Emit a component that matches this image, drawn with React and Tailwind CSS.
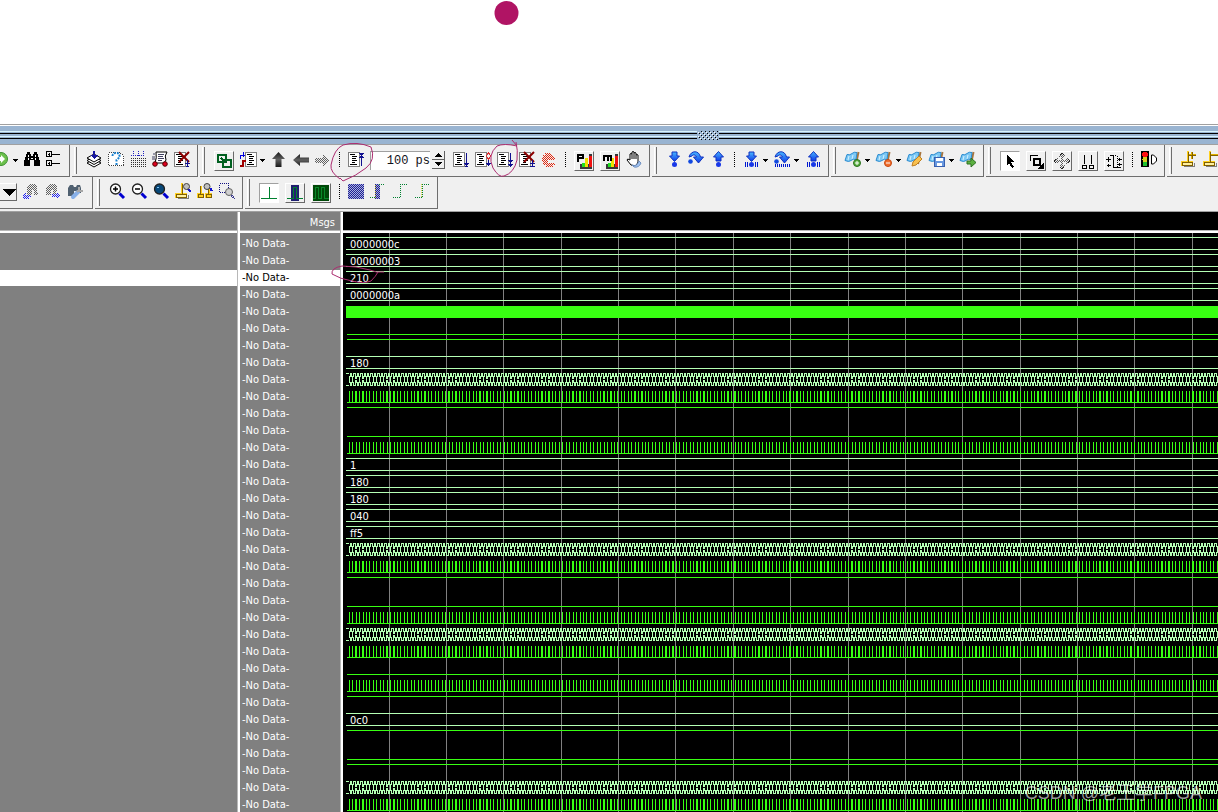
import clsx from 'clsx';

/**
 * Waveform viewer
 * ---------------
 * - Two rows of docked toolbars on top
 * - Below: signal names, current values ("Msgs") and the wave pane
 */

// One entry for each signal row. kind decides how the wave is drawn.
const signals = [
  { kind: 'bus', value: '0000000c' },
  { kind: 'bus', value: '00000003' },
  { kind: 'bus', value: '210', selected: true },
  { kind: 'bus', value: '0000000a' },
  { kind: 'solid' },
  { kind: 'low' },
  { kind: 'high' },
  { kind: 'bus', value: '180' },
  { kind: 'dense' },
  { kind: 'clock' },
  { kind: 'high' },
  { kind: 'low' },
  { kind: 'pulse' },
  { kind: 'bus', value: '1' },
  { kind: 'bus', value: '180' },
  { kind: 'bus', value: '180' },
  { kind: 'bus', value: '040' },
  { kind: 'bus', value: 'ff5' },
  { kind: 'dense' },
  { kind: 'clock' },
  { kind: 'high' },
  { kind: 'low' },
  { kind: 'pulse' },
  { kind: 'dense' },
  { kind: 'clock' },
  { kind: 'low' },
  { kind: 'pulse' },
  { kind: 'high' },
  { kind: 'bus', value: '0c0' },
  { kind: 'high' },
  { kind: 'low' },
  { kind: 'high' },
  { kind: 'dense' },
  { kind: 'clock' },
];

const STEP = 31 / 9; // distance between two edges
const EDGES = 700;

const edgeX = (k) => Math.floor(6.3 + STEP * k);

// The 3rd and 5th edge of every nine is drawn wider
const isWide = (k) => k % 9 === 2 || k % 9 === 4;

// Vertical strokes of a clock or a pulse train
const strokes = (wide) => {
  let d = '';
  for (let k = 0; k < EDGES; k++) {
    const x = edgeX(k);
    d += wide && isWide(k) ? `M${x - 1} 2h2v11h-2z` : `M${x} 2h1v11h-1z`;
  }
  return d;
};

// Bus that changes on every edge
const crossings = () => {
  let d = 'M3 1h3v1h-3zM3 13h3v1h-3z';
  for (let k = 0; k < EDGES; k++) {
    const x = edgeX(k);
    const end = edgeX(k + 1) - 1;
    d += isWide(k) ? `M${x - 1} 4h2v3h-2zM${x - 1} 8h2v3h-2z` : `M${x} 4h1v7h-1z`;
    d += `M${x + 1} 1h1v4h-1zM${x + 1} 10h1v4h-1z`;
    d += `M${end} 1h1v4h-1zM${end} 10h1v4h-1z`;
    d += `M${x + 1} 1h${end - x}v1h-${end - x}zM${x + 1} 13h${end - x}v1h-${end - x}z`;
  }
  return d;
};

const clockPath = strokes(true);
const pulsePath = strokes(false);
const densePath = crossings();

function Wave({ kind, value }) {
  if (kind === 'bus') {
    return (
      <div className="h-[17px] pt-px pl-[3px]">
        <div className="h-[13px] border-y border-[#b4ffb4] pl-1 text-[11px] leading-[13px] text-white">{value}</div>
      </div>
    );
  }
  if (kind === 'solid') {
    return (
      <div className="h-[17px] pt-[2px] pl-[3px]">
        <div className="h-3 bg-[#38ff12]" />
      </div>
    );
  }
  if (kind === 'high' || kind === 'low') {
    return (
      <div className={clsx('h-[17px] pl-1', kind === 'high' ? 'pt-px' : 'pt-[13px]')}>
        <div className="h-px bg-[#38ff12]" />
      </div>
    );
  }
  const d = kind === 'dense' ? densePath : kind === 'clock' ? clockPath : pulsePath;
  return (
    <svg className="block h-[17px] w-full" shapeRendering="crispEdges">
      <path d={d} fill={kind === 'dense' ? '#b4ffb4' : '#38ff12'} fillRule="nonzero" />
      {kind !== 'dense' && <rect x="4" y="13" width="100%" height="1" fill="#38ff12" />}
    </svg>
  );
}

/* ---------- toolbar parts ---------- */

function Tool({ label, children }) {
  return (
    <button aria-label={label} className="h-4 w-4 shrink-0">
      <svg viewBox="0 0 16 16" className="block h-4 w-4 overflow-visible" fill="none" shapeRendering="crispEdges">
        {children}
      </svg>
    </button>
  );
}

// Raised button, or sunken when it is the active mode
function Raised({ label, active, children }) {
  return (
    <button
      aria-label={label}
      className={clsx(
        'h-5 w-5 shrink-0 border border-solid p-px',
        active
          ? 'border-t-[#a0a0a0] border-r-white border-b-white border-l-[#a0a0a0] bg-white'
          : 'border-t-white border-r-[#696969] border-b-[#696969] border-l-white bg-[#f0f0f0]'
      )}
    >
      <svg viewBox="0 0 16 16" className="block h-4 w-4" fill="none" shapeRendering="crispEdges">
        {children}
      </svg>
    </button>
  );
}

function Caret() {
  return (
    <button aria-label="More" className="-ml-[2px] h-4 w-[5px] shrink-0">
      <svg viewBox="0 0 5 16" className="block h-4 w-[5px]" shapeRendering="crispEdges">
        <path d="M0 8h5v1h-1v1h-1v1h-1v-1h-1v-1h-1z" fill="#000" />
      </svg>
    </button>
  );
}

function Dots() {
  return (
    <svg viewBox="0 0 5 16" className="block h-4 w-[5px] shrink-0" shapeRendering="crispEdges">
      <path d="M2.500 1v15" stroke="#000" strokeDasharray="1 1" />
    </svg>
  );
}

function Bar({ label, noHandle, className, children }) {
  return (
    <div
      role="toolbar"
      aria-label={label}
      className={clsx('flex h-8 shrink-0 border-r border-b border-[#6e6e6e]', className || 'pr-[7px]')}
    >
      {!noHandle && <span className="my-[2px] mr-[9px] ml-[2px] w-[3px] border-r border-l border-r-[#6e6e6e] border-l-white" />}
      <div className="flex items-start gap-[6px] pt-[6px]">{children}</div>
    </div>
  );
}

/* ---------- drawings shared by several icons ---------- */

function Sheet() {
  return (
    <>
      <rect x="0.500" y="1.500" width="11" height="14" fill="#fff" stroke="#808080" />
      <path d="M2 3.500h5M4 5.500h5M4 7.500h4M4 9.500h5M4 11.500h3M2 13.500h7" stroke="#000" />
    </>
  );
}

function RedCross() {
  return <path d="M5 1l10 10M15 1l-10 10" stroke="#8b0000" strokeWidth="2" shapeRendering="auto" />;
}

function BlueDown() {
  return <path d="M6 1h5v4h2.500l-5 5.500l-5-5.500h2.500z" fill="url(#blue)" stroke="#1030c0" shapeRendering="auto" />;
}

function BlueUp() {
  return <path d="M6 10h5v-4h2.500l-5-5.500l-5 5.500h2.500z" fill="url(#blue)" stroke="#1030c0" shapeRendering="auto" />;
}

function BlueArc() {
  return (
    <g shapeRendering="auto">
      <path d="M1 6c2-7 10-7 11.500 0h3l-5 6l-5-6h3c-1-2-3-3-4.500-1z" fill="url(#blue)" stroke="#1030c0" />
      <circle cx="2.500" cy="10.500" r="2.300" fill="#1048e0" />
    </g>
  );
}

function Flag() {
  return (
    <g shapeRendering="auto">
      <path d="M13.500 1l-2.500 12" stroke="#a8743c" strokeWidth="2" />
      <path d="M2 3.500q3 1 5-1t5-1l-1 7q-3-1-5 1t-6 0z" fill="#7cc8f4" stroke="#2c8cd0" />
      <path d="M4 5l-1 4M8 4l-1 4" stroke="#d4f0ff" />
    </g>
  );
}

function Lens({ fill = '#fff' }) {
  return (
    <g shapeRendering="auto">
      <path d="M10.500 10.500l4.500 4.500" stroke="#0000d0" strokeWidth="3" />
      <circle cx="6.500" cy="6" r="5" fill={fill} stroke="#202020" strokeWidth="1.300" />
    </g>
  );
}

function Binoculars({ fill }) {
  return (
    <path
      d="M3 1h3v2h1v2h2v-2h1v-2h3v2h1v3h1v3h1v6h-6v-6h-4v6h-6v-6h1v-3h1v-3h1z"
      fill={fill}
    />
  );
}

// Yellow cursor stand
function Stand() {
  return (
    <>
      <path d="M6 0h2v10h4v5h-12v-5h6z" fill="#ffd020" />
      <path d="M7.500 1v10M1.500 11.500h10v3h-10z" stroke="#806000" />
      <path d="M3 15.500h10v-4" stroke="#808080" />
      <path d="M2 12h9v2h-9z" fill="#fff0a0" />
    </>
  );
}

function Chart() {
  return (
    <>
      <path d="M4 16h12v-15h-3v10h-9z" fill="#383838" />
      <rect x="6" y="10" width="3" height="4" fill="#20e020" />
      <rect x="9" y="5" width="3" height="9" fill="#f0e000" />
      <rect x="13" y="3" width="3" height="11" fill="#f01010" />
    </>
  );
}

function Defs() {
  return (
    <svg className="absolute h-0 w-0" aria-hidden="true">
      <defs>
        <linearGradient id="blue" x1="0" y1="0" x2="0" y2="1">
          <stop offset="0" stopColor="#48b8ff" />
          <stop offset="1" stopColor="#1038e8" />
        </linearGradient>
        <linearGradient id="steel" x1="0" y1="0" x2="0" y2="1">
          <stop offset="0" stopColor="#181818" />
          <stop offset="0.5" stopColor="#606060" />
          <stop offset="1" stopColor="#181818" />
        </linearGradient>
        <pattern id="gray-dots" width="2" height="2" patternUnits="userSpaceOnUse">
          <path d="M0 0h1v1h-1zM1 1h1v1h-1z" fill="#606060" />
        </pattern>
        <pattern id="blue-dots" width="2" height="2" patternUnits="userSpaceOnUse">
          <path d="M0 0h1v1h-1zM1 1h1v1h-1z" fill="#2020f0" />
        </pattern>
        <pattern id="navy-dots" width="2" height="2" patternUnits="userSpaceOnUse">
          <path d="M0 0h2v2h-2z" fill="#a8b0e0" />
          <path d="M0 0h1v1h-1zM1 1h1v1h-1z" fill="#202090" />
        </pattern>
        <pattern id="red-dots" width="2" height="2" patternUnits="userSpaceOnUse">
          <path d="M0 0h1v1h-1zM1 1h1v1h-1z" fill="#e02810" />
        </pattern>
        <pattern id="grip" width="4" height="4" patternUnits="userSpaceOnUse">
          <path d="M0 0h1v1h-1zM2 2h1v1h-1z" fill="#000" />
          <path d="M1 1h1v1h-1zM3 3h1v1h-1z" fill="#fff" />
        </pattern>
      </defs>
    </svg>
  );
}

/* ---------- toolbars ---------- */

function TopBars() {
  return (
    <div className="flex gap-[2px] overflow-hidden">
      <Bar label="Edit" noHandle>
        <button aria-label="Add" className="h-4 w-[9px] shrink-0">
          <svg viewBox="0 0 9 16" className="block h-4 w-[9px]">
            <circle cx="1" cy="8" r="6.500" fill="#6cc04c" stroke="#3c9030" />
            <path d="M0 6h1v-2l4 4l-4 4v-2h-1z" fill="#fff" />
          </svg>
        </button>
        <Caret />
        <Tool label="Find">
          <Binoculars fill="#000" />
          <path d="M4.500 4v6M11.500 4v6M7 7.500h2" stroke="#fff" strokeDasharray="2 1" />
        </Tool>
        <Tool label="Expand tree">
          <path d="M0.500 0.500h5v5h-5zM0.500 9.500h5v5h-5zM6 3.500h8M6 12.500h8M2 3.500h2M3.500 2v3M2 12.500h2M3.500 11v3" stroke="#000" />
        </Tool>
      </Bar>

      <Bar label="Compile">
        <Tool label="Compile">
          <g shapeRendering="auto">
            <path d="M1 12l7-4l7 4l-7 4z" fill="#fff" stroke="#000" />
            <path d="M1 9.500l7-4l7 4l-7 4z" fill="#fff" stroke="#000" />
            <path d="M1 7l7-4l7 4l-7 4z" fill="#fff" stroke="#000" />
          </g>
          <path d="M7 0h2v4h3l-4 4l-4-4h3z" fill="#1818a0" />
        </Tool>
        <Tool label="Compile out of date">
          <path d="M0.500 1.500h11l4 3v10h-15z" fill="#fff" stroke="#404040" strokeDasharray="1 1" />
          <path d="M4.500 5q0-3 3.500-3t3.500 3q0 2-3 4v2M8.500 12v2" stroke="#1880d0" strokeWidth="2" strokeDasharray="2 1" shapeRendering="auto" />
        </Tool>
        <Tool label="Compile all">
          <path d="M1.500 7v9M3.500 7v9M5.500 7v9M7.500 7v9M9.500 7v9M11.500 7v9M13.500 7v9M15.500 7v9" stroke="#303030" strokeDasharray="1 1" />
          <path d="M3.500 0v6M8.500 0v6M13.500 0v6M1 4.500h14" stroke="#2020c0" strokeDasharray="1 1" />
        </Tool>
        <Tool label="Simulate">
          <g shapeRendering="auto">
            <path d="M4 1h11q-3 4-1 8l-2 3h-9q2-5 1-11z" fill="#fff" stroke="#000" />
            <path d="M6 3.500h6M6 5.500h5M6 7.500h6M6 9.500h4M0 6h3M0 8h3M1 3h2" stroke="#404060" />
            <circle cx="3" cy="13" r="2.300" fill="#e00020" stroke="#500" />
            <circle cx="13" cy="13" r="2.300" fill="#e00020" stroke="#500" />
          </g>
        </Tool>
        <Tool label="Stop simulation">
          <Sheet />
          <RedCross />
          <path d="M13.500 9v6M11 12.500h5M12 15.500h3" stroke="#101090" />
        </Tool>
      </Bar>

      <Bar label="Run">
        <Raised label="Environment">
          <path d="M2 2h8v7h-8zM7 7h8v7h-8z" stroke="#006020" strokeWidth="2" />
          <path d="M5 5l5 5" stroke="#006020" strokeWidth="2" />
        </Raised>
        <Tool label="Restart">
          <g transform="translate(5 0)"><Sheet /></g>
          <path d="M0.500 8v-4h4M3.500 1v5" stroke="#0000e0" />
          <path d="M0 15h3v-5h3" stroke="#a00000" strokeWidth="2" />
        </Tool>
        <Caret />
        <Tool label="Up">
          <path d="M7.500 1l6.500 7h-3.500v8h-6v-8h-3.500z" fill="url(#steel)" shapeRendering="auto" />
        </Tool>
        <Tool label="Back">
          <path d="M0 9l7-6v3.500h9v5h-9v3.500z" fill="url(#steel)" shapeRendering="auto" />
        </Tool>
        <Tool label="Forward">
          <path d="M15 9l-7-6v3.500h-8v5h8v3.500z" fill="url(#gray-dots)" />
        </Tool>
        <Dots />
        <Tool label="Run restart">
          <Sheet />
          <path d="M13.500 2v13M11 2.500h5M11 6.500h5M12 5.500h3M12 3.500h3" stroke="#101090" />
        </Tool>
        <div className="flex w-[77px] shrink-0 gap-[2px]">
          <input
            aria-label="Run length"
            defaultValue="100 ps"
            className="h-[19px] w-[60px] border-t border-l border-[#a0a0a0] bg-white text-right font-['Liberation_Mono',monospace] text-[12px] text-[#101018] outline-none"
          />
          <div className="flex w-[13px] flex-col">
            <button aria-label="Increase" className="flex h-[9px] items-center justify-center border-r border-b border-[#606060] bg-[#f0f0f0]">
              <svg viewBox="0 0 7 4" className="h-1 w-[7px]" shapeRendering="crispEdges"><path d="M3 0h1v1h1v1h1v1h1v1h-7v-1h1v-1h1v-1h1z" /></svg>
            </button>
            <button aria-label="Decrease" className="flex h-[9px] items-center justify-center border-r border-b border-[#606060] bg-[#f0f0f0]">
              <svg viewBox="0 0 7 4" className="h-1 w-[7px]" shapeRendering="crispEdges"><path d="M0 0h7v1h-1v1h-1v1h-1v1h-1v-1h-1v-1h-1v-1h-1z" /></svg>
            </button>
          </div>
        </div>
        <Tool label="Run">
          <Sheet />
          <path d="M13.500 2v13M11 12.500h5M12 13.500h3M12 15.500h3" stroke="#101090" />
        </Tool>
        <Tool label="Continue run">
          <Sheet />
          <path d="M13.500 7v8M11 12.500h5M12 13.500h3" stroke="#101090" />
          <path d="M13.500 2l2.500 3l-2.500 3l-2.500-3z" stroke="#e03030" />
        </Tool>
        <Tool label="Run all">
          <Sheet />
          <path d="M13.500 2v14M11 9.500h5M12 10.500h3M11 13.500h5M12 14.500h3" stroke="#101090" />
        </Tool>
        <Tool label="Break">
          <Sheet />
          <RedCross />
          <path d="M13.500 9v6M11 12.500h5M11 15.500h5" stroke="#101090" />
        </Tool>
        <Tool label="Stop">
          <path d="M4 2h6v2h2v2h2v3h-7v3h7v2h-2v2h-7v-2h-3v-3h-1v-5h1v-2h2z" fill="url(#red-dots)" />
        </Tool>
        <Dots />
        <Raised label="Performance profiling">
          <Chart />
          <path d="M2 9v-7h5v3h-5" stroke="#000" strokeWidth="2" />
        </Raised>
        <Raised label="Memory profiling">
          <Chart />
          <path d="M2 8v-5h7v5M5.500 3v5" stroke="#000" strokeWidth="2" />
        </Raised>
        <Tool label="Pan">
          <g shapeRendering="auto">
            <path d="M5 14l-4-5q0-2 3 0v-6q1-1 2 0v-2q1-1 2 0v1q1-1 2 0v2q1-1 2 0v7l-2 4z" fill="#fff" stroke="#000" />
            <path d="M6 3v5M8 2v6M10 4v4" stroke="#000" />
            <path d="M6 14q5 2 7-4l2 2q-2 5-7 4z" fill="#a0c4f4" stroke="#7090c0" />
          </g>
        </Tool>
      </Bar>

      <Bar label="Step">
        <Tool label="Step into">
          <BlueDown />
          <circle cx="8.500" cy="13.500" r="2.500" fill="#1838e8" shapeRendering="auto" />
        </Tool>
        <Tool label="Step over">
          <BlueArc />
        </Tool>
        <Tool label="Step out">
          <BlueUp />
          <circle cx="8.500" cy="13.500" r="2.500" fill="#1838e8" shapeRendering="auto" />
        </Tool>
        <Dots />
        <Tool label="Step into current">
          <BlueDown />
          <circle cx="8.500" cy="13.500" r="2.500" fill="#1838e8" shapeRendering="auto" />
          <path d="M2.500 11v5M4.500 11v5M12.500 11v5M14.500 11v5" stroke="#0018d0" />
        </Tool>
        <Caret />
        <Tool label="Step over current">
          <BlueArc />
          <path d="M1 14.500h15" stroke="#0018d0" strokeWidth="3" strokeDasharray="1 1" />
        </Tool>
        <Caret />
        <Tool label="Step out current">
          <BlueUp />
          <circle cx="8.500" cy="13.500" r="2.500" fill="#1838e8" shapeRendering="auto" />
          <path d="M2.500 11v5M4.500 11v5M12.500 11v5M14.500 11v5" stroke="#0018d0" />
        </Tool>
      </Bar>

      <Bar label="Bookmarks">
        <Tool label="Add bookmark">
          <Flag />
          <circle cx="12" cy="12" r="3.500" fill="#5cb040" stroke="#2c7020" shapeRendering="auto" />
          <path d="M10 12h4M12 10v4" stroke="#fff" shapeRendering="auto" />
        </Tool>
        <Caret />
        <Tool label="Delete bookmark">
          <Flag />
          <circle cx="12" cy="12" r="3.500" fill="#f07030" stroke="#c84810" shapeRendering="auto" />
          <path d="M10 12h4" stroke="#fff" shapeRendering="auto" />
        </Tool>
        <Caret />
        <Tool label="Edit bookmark">
          <Flag />
          <path d="M5 15l1-4l6-6l3 3l-6 6z" fill="#f8c050" stroke="#c08020" shapeRendering="auto" />
        </Tool>
        <Tool label="Save bookmark">
          <Flag />
          <path d="M5.500 6.500h10v9h-10z" fill="#6898e0" stroke="#3860b0" />
          <path d="M7 7h7v3h-7zM8 12h5v3h-5z" fill="#fff" />
        </Tool>
        <Caret />
        <Tool label="Go to bookmark">
          <Flag />
          <path d="M7 10h4v-3l5 4.500l-5 4.500v-3h-4z" fill="#5cb040" stroke="#2c7020" shapeRendering="auto" />
        </Tool>
      </Bar>

      <Bar label="Mouse mode">
        <Raised label="Select mode" active>
          <path d="M5 2v10l2-2l3 5l2-1l-3-5h3z" fill="#000" />
        </Raised>
        <Raised label="Zoom mode">
          <path d="M2.500 8v-5.500h7" stroke="#000" />
          <path d="M6 6h6v6h-6z" stroke="#000" strokeWidth="2" />
          <path d="M16 9v7h-6z" fill="#000" />
        </Raised>
        <Raised label="Pan mode">
          <path
            d="M8 0l3 3v1h-2v3h3v-2h1l3 3l-3 3h-1v-2h-3v3h2v1l-3 3l-3-3v-1h2v-3h-3v2h-1l-3-3l3-3h1v2h3v-3h-2v-1z"
            fill="url(#gray-dots)"
          />
          <path d="M8 0l-3 3M8 0l3 3M16 8l-3-3M16 8l-3 3M8 16l-3-3M8 16l3-3M0 8l3-3M0 8l3 3" stroke="#202020" strokeDasharray="1 1" />
        </Raised>
        <Raised label="Cursor mode">
          <path d="M4.500 2v9M11.500 2v9M2.500 12.500h4v3h-4zM9.500 12.500h4v3h-4z" stroke="#000" />
        </Raised>
        <Raised label="Edit mode">
          <path d="M4 2.500h3.500v12h3.500M11 14.500h4M0 6.500h5M2.500 4v5M1 12.500h4M2.500 11v3M12 6.500h4M13.500 5v3M12 11.500h4M13.500 10v3" stroke="#000" />
          <path d="M7 2.500h4v12" stroke="#000" strokeDasharray="1 1" />
        </Raised>
        <Dots />
        <Tool label="Stop drawing">
          <rect x="0" y="0" width="8" height="16" fill="#000" />
          <circle cx="4" cy="3.500" r="3" fill="#ff1010" />
          <circle cx="4" cy="8.500" r="2.500" fill="#d8d020" />
          <circle cx="4" cy="13" r="2.500" fill="#20c030" />
          <path d="M10.500 4v9h2l3-3v-3l-3-3z" fill="#fff" stroke="#000" shapeRendering="auto" />
        </Tool>
      </Bar>

      <Bar label="Cursors">
        <Tool label="Insert cursor">
          <Stand />
          <path d="M8 4h7M11 1v7" stroke="#e0b000" strokeWidth="2" />
          <path d="M8 4.500h7M11.500 1v7" stroke="#806000" />
        </Tool>
        <Tool label="Delete cursor">
          <Stand />
          <path d="M8 4h8" stroke="#e0b000" strokeWidth="2" />
          <path d="M8 4.500h8" stroke="#806000" />
        </Tool>
      </Bar>
    </div>
  );
}

function BottomBars() {
  return (
    <div className="flex gap-[2px] overflow-hidden">
      <Bar label="Search" noHandle className="pr-[9px]">
        <div className="relative h-[18px] w-[17px] shrink-0">
          <select aria-label="Search text" className="h-[18px] w-[17px] appearance-none border-t border-r border-b border-t-white border-r-[#696969] border-b-[#696969] bg-[#f0f0f0]">
            <option></option>
          </select>
          <svg viewBox="0 0 13 7" className="pointer-events-none absolute top-[6px] left-[3px] h-[7px] w-[13px]" shapeRendering="crispEdges">
            <path d="M0 0h13l-6 7h-1z" fill="#000" />
          </svg>
        </div>
        <Tool label="Find previous">
          <path d="M4 3l3-2h4l3 3v4l1 2v2h-4v-5h-2v5h-5v-4z" fill="url(#gray-dots)" />
          <path d="M0 11l3-1v2h5v2h-2v2h-6z" fill="url(#blue-dots)" />
        </Tool>
        <Tool label="Find next">
          <path d="M1 4l3-3h5l3 3v4l-1 3h-3v-4h-2v5h-5z" fill="url(#gray-dots)" />
          <path d="M7 11h5v-2l4 4l-4 3v-2h-5z" fill="url(#blue-dots)" />
        </Tool>
        <Tool label="Search options">
          <g shapeRendering="auto">
            <path d="M1 5l2-3h3l1 2h2l1-2h3l1 3v5h-5v-2h-2v5h-6v-4z" fill="#506070" />
            <path d="M6 14l5-5" stroke="#88b0e8" strokeWidth="4" strokeLinecap="round" />
            <path d="M10 9l2-2M12 4v4h4" stroke="#a8a8a8" strokeWidth="2" />
          </g>
        </Tool>
      </Bar>

      <Bar label="Zoom">
        <Tool label="Zoom in">
          <Lens />
          <path d="M4 6h5M6.500 3.500v5" stroke="#000" strokeWidth="1.500" shapeRendering="auto" />
        </Tool>
        <Tool label="Zoom out">
          <Lens />
          <path d="M4 6h5" stroke="#000" strokeWidth="1.500" shapeRendering="auto" />
        </Tool>
        <Tool label="Zoom full">
          <Lens fill="#084878" />
          <circle cx="5" cy="4.500" r="1" fill="#80c0f0" />
        </Tool>
        <Tool label="Zoom on cursor">
          <Stand />
          <path d="M13 6l2.500 3" stroke="#1010d0" strokeWidth="2" />
          <circle cx="11.500" cy="3.500" r="3" fill="#c0c0c0" stroke="#404040" shapeRendering="auto" />
        </Tool>
        <Tool label="Zoom between cursors">
          <path d="M3 3h2v7h2v5h-7v-5h3zM11 6h2v4h2v5h-7v-5h3z" fill="#ffd020" />
          <path d="M3.500 3v8M11.500 6v5M1 11.500h5v3h-5zM9 11.500h5v3h-5z" stroke="#806000" />
          <path d="M13 5l2 3" stroke="#1010d0" strokeWidth="2" />
          <circle cx="10" cy="3.500" r="3" fill="#c0c0c0" stroke="#404040" shapeRendering="auto" />
        </Tool>
        <Tool label="Zoom other">
          <path d="M0.500 0.500h9v9h-9z" stroke="#101080" strokeDasharray="1 1" />
          <path d="M11 11l5 5" stroke="#404090" strokeWidth="2" strokeDasharray="1 1" />
          <circle cx="10" cy="9" r="3.500" fill="#d0d0d0" stroke="#606060" shapeRendering="auto" />
        </Tool>
      </Bar>

      <Bar label="Wave compare">
        <Raised label="Line" active>
          <path d="M0 13.500h16M8.500 2v12" stroke="#008030" />
        </Raised>
        <Raised label="Pulse">
          <rect x="4" y="0" width="8" height="16" fill="#202070" />
          <path d="M0 13.500h6.500v-11h3v11h6.500" stroke="#008030" />
        </Raised>
        <Raised label="Clock">
          <rect width="16" height="16" fill="#004808" />
          <path d="M0 13.500h2.500v-11h3v11h3v-11h3v11h4" stroke="#088828" />
        </Raised>
        <Dots />
        <Tool label="Select region">
          <rect y="1" width="16" height="15" fill="url(#navy-dots)" />
        </Tool>
        <Tool label="Edge region">
          <rect x="5" y="1" width="5" height="15" fill="url(#navy-dots)" />
          <path d="M0 14.500h5M9 1.500h6" stroke="#008030" strokeDasharray="1 1" />
          <path d="M5.500 2v13" stroke="#d8d040" strokeDasharray="1 1" />
        </Tool>
        <Tool label="Rising edge">
          <path d="M1 14.500h7M8.500 1v14M8 1.500h7" stroke="#008030" strokeDasharray="1 1" />
        </Tool>
        <Tool label="Next edge">
          <path d="M1 14.500h7M8 1.500h7" stroke="#008030" strokeDasharray="1 1" />
          <path d="M7.500 1v14" stroke="#d8d040" strokeDasharray="1 1" />
          <path d="M8.500 1v14" stroke="#008030" strokeDasharray="1 1" />
        </Tool>
      </Bar>
    </div>
  );
}

/* ---------- panes ---------- */

function NamesPane() {
  return (
    <div className="w-[240px] shrink-0 border-r-2 border-white">
      <div className="h-full border-r border-[#b8b8b8] bg-[#808080]">
        <div className="h-[21px] border-b-2 border-white">
          <div className="h-[19px] border-b border-[#b8b8b8]" />
        </div>
        <ul className="pt-[3px]">
          {signals.map((s, i) => (
            <li key={i} className="h-[17px]">
              <div className={clsx('h-4', s.selected && 'bg-white')} />
            </li>
          ))}
        </ul>
      </div>
    </div>
  );
}

function ValuesPane() {
  return (
    <div className="w-[103px] shrink-0 border-r-2 border-white">
      <div className="h-full border-r border-[#b8b8b8] bg-[#808080] text-[11px] text-white">
        <div className="h-[21px] border-b-2 border-white">
          <div className="h-[19px] border-b border-[#b8b8b8] pr-[5px] text-right leading-[22px]">Msgs</div>
        </div>
        <ul className="pt-[3px]">
          {signals.map((s, i) => (
            <li key={i} className="h-[17px]">
              <div className={clsx('h-4 pl-[2px] leading-4', s.selected && 'bg-white text-black')}>-No Data-</div>
            </li>
          ))}
        </ul>
      </div>
    </div>
  );
}

function WavePane() {
  const lines = [];
  for (let k = 0; k < 45; k++) lines.push(Math.floor(46 + 57.38 * k));

  return (
    <div className="min-w-0 flex-1 overflow-hidden bg-black">
      <div className="h-[21px] border-b-2 border-white">
        <div className="h-[19px] border-b border-[#b8b8b8]" />
      </div>
      <div className="relative pt-[3px]">
        <svg className="absolute inset-0 h-full w-full" shapeRendering="crispEdges">
          {lines.map((x) => (
            <rect key={x} x={x} y="0" width="1" height="100%" fill="#808080" />
          ))}
        </svg>
        <div className="relative">
          {signals.map((s, i) => (
            <Wave key={i} kind={s.kind} value={s.value} />
          ))}
        </div>
      </div>
    </div>
  );
}

// Hand-drawn marks on top of the window
function Marks() {
  return (
    <svg className="pointer-events-none absolute inset-0 h-full w-full" fill="none" stroke="#ac2c70" strokeWidth="1">
      <circle cx="506.500" cy="13" r="12" fill="#b01464" stroke="none" />
      <path d="M340 179Q330 172 331 165Q334 149 343 145Q357 141 371 147Q376 160 366 168Q356 176 343 181L340 178" />
      <path d="M512 140L517 146Q504 143 497 146Q487 155 493 168Q499 178 504 176Q514 173 517 160Q518 150 516 142" />
      <path d="M384 272Q376 273 370 270Q356 266 342 266Q331 268 332 274Q340 279 352 281Q364 284 371 281Q376 276 378 272" />
    </svg>
  );
}

export default function App() {
  return (
    <div className="relative flex h-screen flex-col overflow-hidden bg-white font-['DejaVu_Sans_Condensed','DejaVu_Sans',sans-serif]">
      <Defs />

      {/* Empty canvas above the docked window */}
      <div className="h-[124px] shrink-0" />

      {/* Splitter */}
      <div className="relative shrink-0 border-t border-[#a0a0a0] pt-px">
        <div className="h-[5px] bg-[#99b4d1]" />
        <div className="h-px bg-[#d8f4fc]" />
        <div className="h-px bg-[#99b4d1]" />
        <div className="h-px bg-black" />
        <div className="h-[2px] bg-[#99b4d1]" />
        <div className="h-px bg-[#d8f4fc]" />
        <div className="h-px bg-[#99b4d1]" />
        <div className="h-px bg-black" />
        <div className="h-[5px] bg-[#99b4d1]" />
        <svg className="absolute top-[6px] left-[697px] h-[9px] w-[22px]" shapeRendering="crispEdges">
          <rect width="22" height="9" fill="#99b4d1" />
          <rect x="1" width="20" height="9" fill="url(#grip)" />
        </svg>
      </div>

      <div className="shrink-0 border-t border-b border-[#a0a0a0] bg-[#f0f0f0] pb-[2px]">
        <TopBars />
        <BottomBars />
      </div>

      <div className="flex min-h-0 flex-1">
        <NamesPane />
        <ValuesPane />
        <WavePane />
      </div>

      <Marks />
      <div className="absolute right-4 bottom-[5px] font-['Liberation_Sans','Noto_Sans_CJK_SC',sans-serif] text-[18px] leading-7 text-white/60">
        CSDN @老王学FPGA
      </div>
    </div>
  );
}
